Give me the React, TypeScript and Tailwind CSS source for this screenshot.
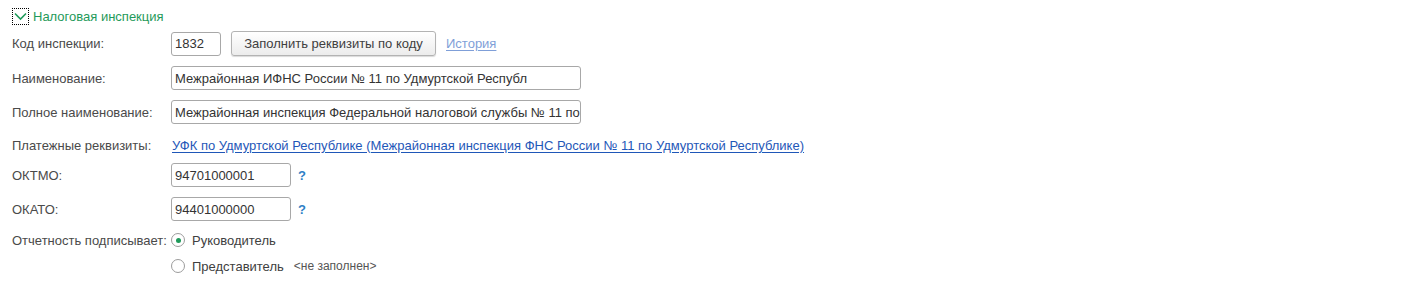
import React from 'react'

const font = { fontFamily: '"Liberation Sans", Arial, sans-serif' }

function Label({ children }: { children: React.ReactNode }) {
  return <div className="w-[159px] shrink-0 text-[#4a4a4a]">{children}</div>
}

function Field({ value, width }: { value: string; width: string }) {
  return (
    <div
      className={`${width} h-[24px] flex items-center px-[3px] border border-[#a8a8a8] rounded-[3px] bg-white text-[#333] overflow-hidden whitespace-nowrap`}
    >
      {value}
    </div>
  )
}

function Radio({ checked }: { checked?: boolean }) {
  return (
    <span className="w-[14px] h-[14px] rounded-full border border-[#9c9c9c] bg-white flex items-center justify-center">
      {checked && <span className="w-[5px] h-[5px] rounded-full bg-[#1f9a5a]" />}
    </span>
  )
}

export default function App() {
  return (
    <div className="w-[1401px] h-[281px] bg-white pl-[12px] text-[13px] leading-none" style={font}>
      {/* Group header */}
      <div className="mt-[8px] h-[17px] flex items-center">
        <span className="w-[17px] h-[17px] border border-dotted border-black flex items-center justify-center">
          <svg width="13" height="9" viewBox="0 0 13 9" fill="none">
            <path d="M1 1.5 L6.5 7 L12 1.5" stroke="#1f9a5a" strokeWidth="1.6" />
          </svg>
        </span>
        <span className="ml-[4px] text-[#1f9a5a]">Налоговая инспекция</span>
      </div>

      {/* Code */}
      <div className="mt-[6px] h-[25px] flex items-center">
        <Label>Код инспекции:</Label>
        <Field value="1832" width="w-[50px]" />
        <button className="ml-[10px] w-[205px] h-[25px] border border-[#b3b3b3] rounded-[3px] bg-gradient-to-b from-white to-[#ececec] shadow-[0_1px_1px_rgba(0,0,0,0.15)] text-[#404040]">
          Заполнить реквизиты по коду
        </button>
        <a className="ml-[10px] text-[#7f9fd8] underline underline-offset-2">История</a>
      </div>

      {/* Names */}
      <div className="mt-[10px] h-[24px] flex items-center">
        <Label>Наименование:</Label>
        <Field value="Межрайонная ИФНС России № 11 по Удмуртской Республ" width="w-[410px]" />
      </div>
      <div className="mt-[10px] h-[24px] flex items-center">
        <Label>Полное наименование:</Label>
        <Field value="Межрайонная инспекция Федеральной налоговой службы № 11 по" width="w-[410px]" />
      </div>

      {/* Payment details */}
      <div className="mt-[9px] h-[24px] flex items-center">
        <Label>Платежные реквизиты:</Label>
        <a className="ml-[1px] text-[#1f57b8] underline underline-offset-2">
          УФК по Удмуртской Республике (Межрайонная инспекция ФНС России № 11 по Удмуртской Республике)
        </a>
      </div>

      {/* Codes */}
      <div className="mt-[6px] h-[24px] flex items-center">
        <Label>ОКТМО:</Label>
        <Field value="94701000001" width="w-[120px]" />
        <span className="ml-[7px] font-bold text-[#2f7fc6]">?</span>
      </div>
      <div className="mt-[10px] h-[24px] flex items-center">
        <Label>ОКАТО:</Label>
        <Field value="94401000000" width="w-[120px]" />
        <span className="ml-[7px] font-bold text-[#2f7fc6]">?</span>
      </div>

      {/* Signer */}
      <div className="mt-[8px] h-[22px] flex items-center">
        <Label>Отчетность подписывает:</Label>
        <Radio checked />
        <span className="ml-[7px] text-[#404040]">Руководитель</span>
      </div>
      <div className="mt-[4px] h-[22px] flex items-center">
        <div className="w-[159px] shrink-0" />
        <Radio />
        <span className="ml-[7px] text-[#404040]">Представитель</span>
        <span className="ml-[10px] text-[12px] text-[#555]">&lt;не заполнен&gt;</span>
      </div>
    </div>
  )
}
